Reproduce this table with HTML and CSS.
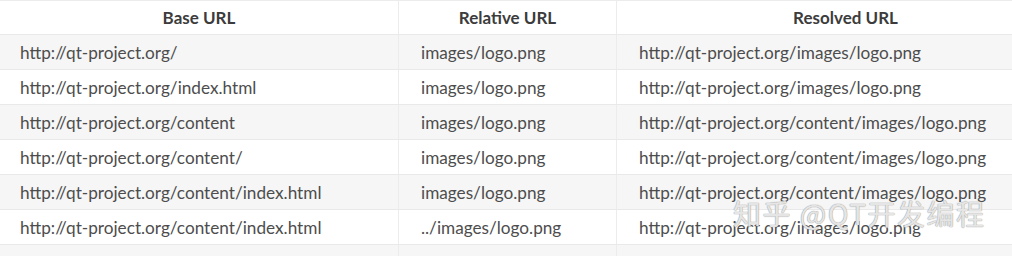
FILE: index.html
```html
<!DOCTYPE html>
<html lang="en">
<head>
<meta charset="utf-8">
<title>URL resolution</title>
<link rel="stylesheet" href="styles.css">
</head>
<body>
<div class="page">
  <div class="table">
    <div class="row head">
      <div class="cell c1">Base URL</div>
      <div class="cell c2">Relative URL</div>
      <div class="cell c3">Resolved URL</div>
    </div>
    <div class="row odd">
      <div class="cell c1">http://qt-project.org/</div>
      <div class="cell c2">images/logo.png</div>
      <div class="cell c3">http://qt-project.org/images/logo.png</div>
    </div>
    <div class="row">
      <div class="cell c1">http://qt-project.org/index.html</div>
      <div class="cell c2">images/logo.png</div>
      <div class="cell c3">http://qt-project.org/images/logo.png</div>
    </div>
    <div class="row odd">
      <div class="cell c1">http://qt-project.org/content</div>
      <div class="cell c2">images/logo.png</div>
      <div class="cell c3">http://qt-project.org/content/images/logo.png</div>
    </div>
    <div class="row">
      <div class="cell c1">http://qt-project.org/content/</div>
      <div class="cell c2">images/logo.png</div>
      <div class="cell c3">http://qt-project.org/content/images/logo.png</div>
    </div>
    <div class="row odd">
      <div class="cell c1">http://qt-project.org/content/index.html</div>
      <div class="cell c2">images/logo.png</div>
      <div class="cell c3">http://qt-project.org/content/images/logo.png</div>
    </div>
    <div class="row">
      <div class="cell c1">http://qt-project.org/content/index.html</div>
      <div class="cell c2">../images/logo.png</div>
      <div class="cell c3">http://qt-project.org/images/logo.png</div>
    </div>
    <div class="row odd">
      <div class="cell c1"></div>
      <div class="cell c2"></div>
      <div class="cell c3"></div>
    </div>
  </div>
  <div class="watermark">知乎 @QT开发编程</div>
</div>
</body>
</html>
```
FILE: styles.css
```css
html, body {
  margin: 0;
  padding: 0;
  background: #ffffff;
}
body {
  width: 1012px;
  height: 256px;
  overflow: hidden;
  font-family: "Lato", "Open Sans", sans-serif;
  color: #4d4d4d;
}
.page {
  position: relative;
  width: 1012px;
  height: 256px;
  overflow: hidden;
}
.table {
  display: flex;
  flex-direction: column;
  border-top: 1px solid #ececec;
}
.row {
  display: grid;
  grid-template-columns: 399px 218px 395px;
  height: 35px;
  flex-shrink: 0;
  border-bottom: 1px solid #e9e9e9;
  box-sizing: border-box;
  background: #ffffff;
}
.row.odd {
  background: #f6f6f6;
}
.row.head {
  height: 34px;
}
.cell {
  display: flex;
  align-items: center;
  font-size: 17.2px;
  white-space: nowrap;
  box-sizing: border-box;
}
.c1 {
  padding-left: 20px;
  border-right: 1px solid #ececec;
}
.c2 {
  padding-left: 22px;
  border-right: 1px solid #ececec;
}
.c3 {
  padding-left: 22px;
}
.head .cell {
  justify-content: center;
  font-weight: 700;
  color: #3c3c3c;
  font-size: 17px;
  padding-left: 0;
}
.head .c3 {
  padding-left: 62px;
}
.watermark {
  position: absolute;
  left: 733px;
  top: 193px;
  font-family: "Noto Sans CJK SC", sans-serif;
  font-size: 28px;
  letter-spacing: 1.5px;
  color: rgba(255, 255, 255, 0.75);
  text-shadow: 0 0 1px #9a9a9a, 0 0 1px #9a9a9a;
  white-space: nowrap;
}
```
